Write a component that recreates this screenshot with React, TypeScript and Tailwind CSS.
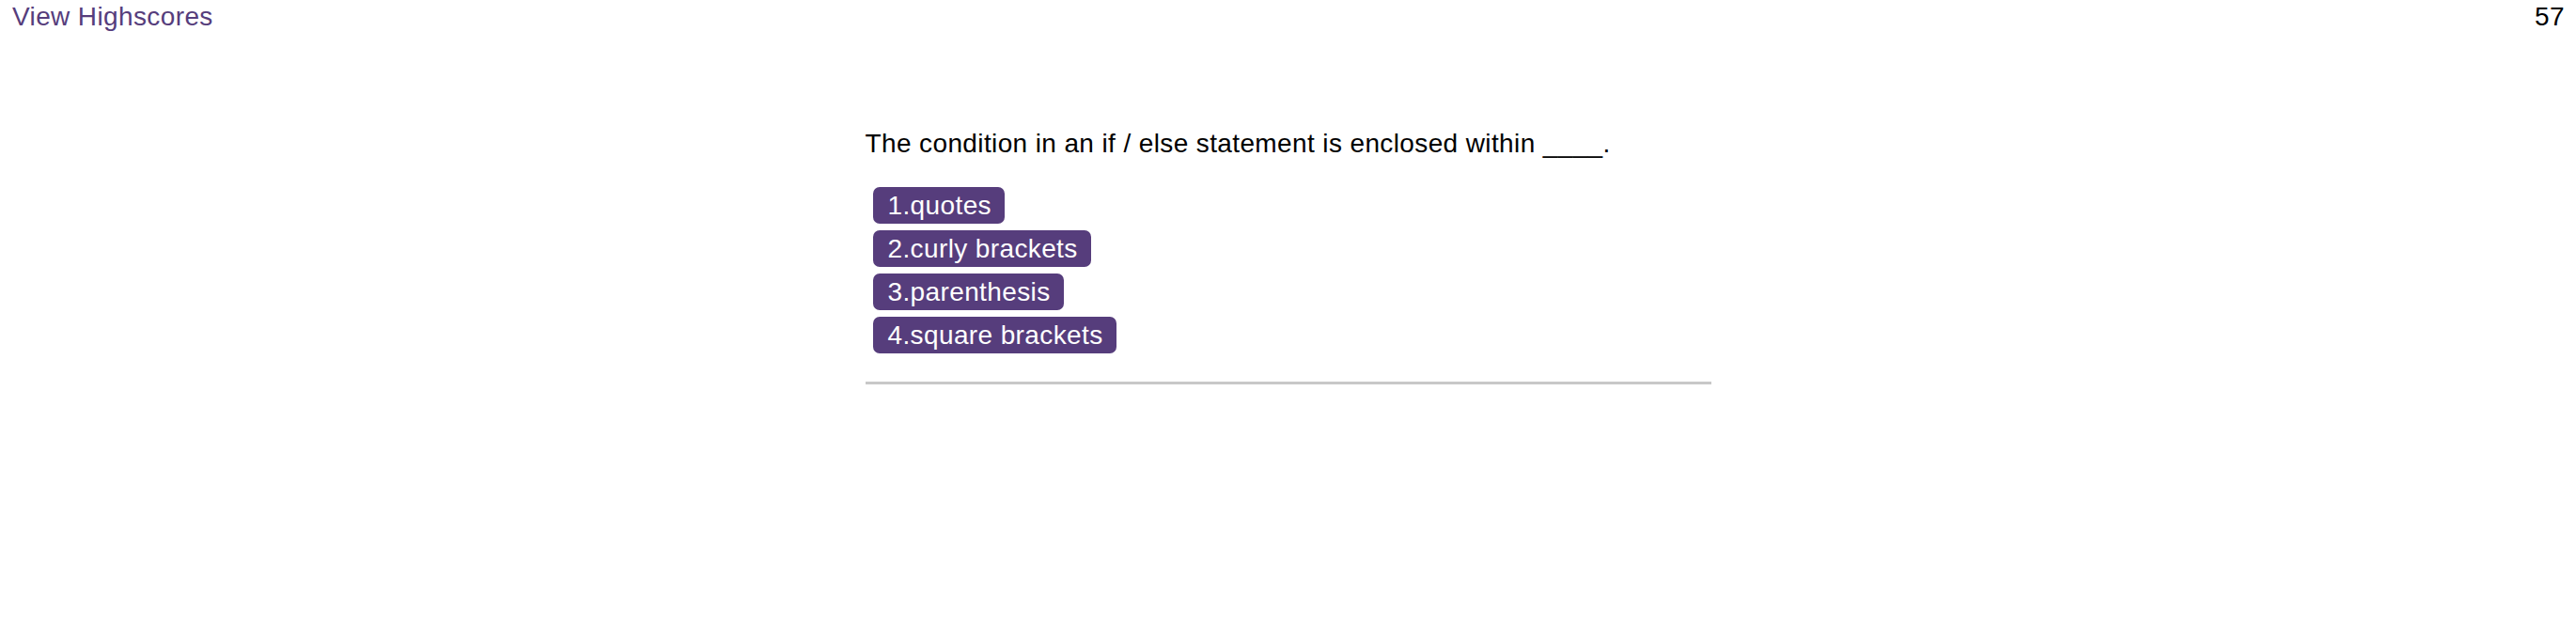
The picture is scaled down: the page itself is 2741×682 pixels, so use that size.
import React from "react";

const choices = ["1.quotes", "2.curly brackets", "3.parenthesis", "4.square brackets"];

export default function App() {
  return (
    <div className="min-h-[682px] w-full bg-white text-black tracking-[0.38px]" style={{ fontFamily: '"Liberation Sans", Arial, sans-serif' }}>
      <header className="flex items-start justify-between pl-[13px] pr-[12px] pt-[2px] text-[28px] leading-[32px]">
        <a className="text-[#563d7c]">View Highscores</a>
        <span>57</span>
      </header>
      <main className="mx-auto mt-[103px] w-[900px]">
        <p className="text-[28px] leading-[32px]">The condition in an if / else statement is enclosed within ____.</p>
        <div className="mt-[30px] flex flex-col items-start gap-[7px] pl-[8px]">
          {choices.map((c) => (
            <button
              key={c}
              className="flex h-[39px] items-center rounded-[7px] bg-[#563d7c] pl-[16px] pr-[14px] text-[28px] leading-[32px] text-white"
            >
              {c}
            </button>
          ))}
        </div>
        <div className="mt-[30px] h-[3px] w-full bg-[#c8c8c8]" />
      </main>
    </div>
  );
}
